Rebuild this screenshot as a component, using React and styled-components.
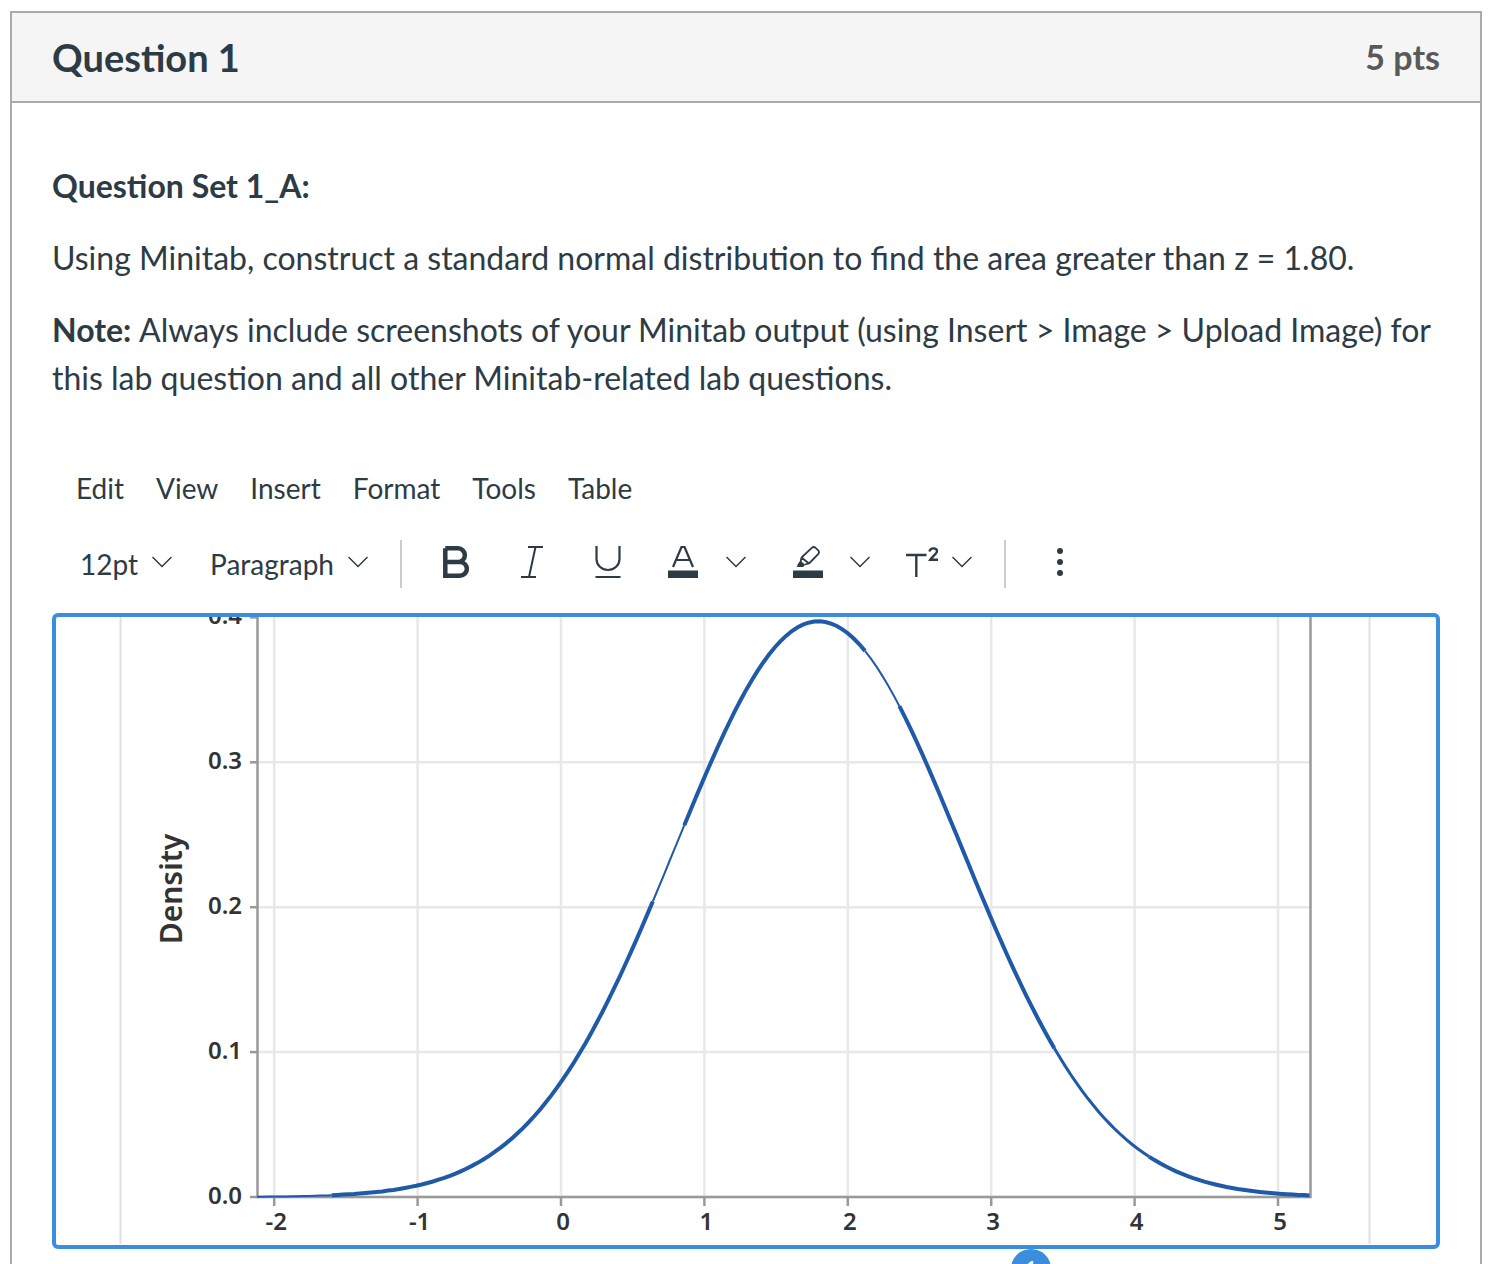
import React from 'react';
import styled, { createGlobalStyle } from 'styled-components';

const GlobalStyle = createGlobalStyle`
* {
  box-sizing: border-box;
}
body {
  margin: 0;
  background: #ffffff;
  color: #2d3b45;
  font-family: Lato, "Open Sans", sans-serif;
}
`;

const Page = styled.main`
height: 100vh;
overflow: hidden;
padding: 11px 14px 0 10px;
`;

const QuestionCard = styled.section`
border: 2px solid #aaaaaa;
min-height: 1400px;
`;

const QuestionHeader = styled.header`
display: flex;
align-items: center;
justify-content: space-between;
min-height: 90px;
padding: 0 40px;
background: #f5f5f5;
border-bottom: 2px solid #aaaaaa;
`;

const QuestionTitle = styled.h2`
margin: 0;
font-size: 38px;
line-height: 48px;
font-weight: 700;
`;

const Points = styled.span`
color: #595959;
font-size: 34px;
line-height: 48px;
font-weight: 700;
`;

const QuestionBody = styled.div`
padding: 59px 40px 0;
`;

const QuestionText = styled.div`
display: flex;
flex-direction: column;
gap: 24px;
padding-bottom: 62px;
`;

const Paragraph = styled.p`
margin: 0;
font-size: 32px;
line-height: 48px;
`;

const MenuBar = styled.nav`
display: flex;
gap: 32px;
padding: 0 24px;
`;

const MenuButton = styled.button`
border: 0;
padding: 0;
background: none;
color: inherit;
font-family: inherit;
font-size: 28px;
line-height: 48px;
cursor: pointer;
`;

const Toolbar = styled.div`
display: flex;
align-items: center;
height: 48px;
margin: 28px 0 25px;
padding-left: 28px;
`;

const ToolButton = styled.button`
display: flex;
align-items: center;
gap: 14px;
border: 0;
padding: 0;
margin-right: ${({ $after }) => $after || 0}px;
background: none;
color: inherit;
font-family: inherit;
font-size: 28px;
line-height: 48px;
cursor: pointer;
`;

const Separator = styled.span`
width: 2px;
height: 48px;
margin-right: ${({ $after }) => $after}px;
background: #c7cdd1;
`;

const Icon = styled.svg`
display: block;
flex: none;
margin-bottom: 4px;
fill: none;
stroke: currentColor;
`;

const Editor = styled.div`
position: relative;
height: 636px;
border: 4px solid #3b8ede;
border-radius: 6px;
`;

const Plot = styled.svg`
display: block;
margin: 0 auto;
max-width: 100%;
`;

const AxisText = styled.text`
fill: #333333;
font-family: "Noto Sans", "Open Sans", sans-serif;
font-size: ${({ $size }) => $size || 24}px;
font-weight: 600;
`;

const Badge = styled.span`
position: absolute;
top: 632px;
left: 955px;
width: 40px;
height: 40px;
border-radius: 50%;
background: #3b8ede;
color: #ffffff;
font-size: 24px;
line-height: 40px;
text-align: center;
`;

const menus = ['Edit', 'View', 'Insert', 'Format', 'Tools', 'Table'];
const xTicks = [-2, -1, 0, 1, 2, 3, 4, 5];
const yTicks = [0, 0.1, 0.2, 0.3, 0.4];

// the stroke gets lighter and heavier along the curve
const curveParts = [
  { from: -2.12, to: -1.6, width: 2 },
  { from: -1.6, to: 0.64, width: 4 },
  { from: 0.64, to: 0.86, width: 2 },
  { from: 0.86, to: 2.12, width: 4 },
  { from: 2.12, to: 2.36, width: 2 },
  { from: 2.36, to: 3.44, width: 4 },
  { from: 3.44, to: 4.1, width: 3 },
  { from: 4.1, to: 5.22, width: 4 },
];

const toX = (value) => 443 + value * 143.4;
const toY = (value) => 580 - value * 1449;
const density = (value) => 0.3973 * Math.exp(-((value - 1.795) ** 2) / 2);

const curvePoints = (from, to) => {
  const steps = Math.ceil((to - from) / 0.04);
  return Array.from({ length: steps + 1 }, (_, index) => {
    const value = from + ((to - from) * index) / steps;
    return `${toX(value).toFixed(1)},${toY(density(value)).toFixed(1)}`;
  }).join(' ');
};

function Chevron() {
  return (
    <Icon width="20" height="12" viewBox="0 0 20 12" strokeWidth="1.5">
      <path d="M.5 1 10 10.5 19.5 1" />
    </Icon>
  );
}

function DensityPlot() {
  return (
    <Plot width="1256" height="628" viewBox="0 0 1256 628" role="img" aria-label="Density">
      <g stroke="#e0e0e0" strokeWidth="2">
        <path d="M2.5 0V627M1251.5 0V627" />
      </g>
      <g stroke="#e8e8e8" strokeWidth="2.5">
        {xTicks.map((tick) => (
          <line key={ tick } x1={ toX(tick) } x2={ toX(tick) } y1="0" y2="580" />
        ))}
        {yTicks.slice(0, 4).map((tick) => (
          <line key={ tick } x1="139" x2="1193" y1={ toY(tick) } y2={ toY(tick) } />
        ))}
      </g>
      <g stroke="#999999" strokeWidth="2.5">
        <path d="M139.5 0V580H1192.5V0" fill="none" />
        {xTicks.map((tick) => (
          <line key={ tick } x1={ toX(tick) } x2={ toX(tick) } y1="580" y2="589" />
        ))}
        {yTicks.map((tick) => (
          <line key={ tick } x1="132" x2="139" y1={ toY(tick) } y2={ toY(tick) } />
        ))}
      </g>
      <g fill="none" stroke="#1f5aa8">
        {curveParts.map(({ from, to, width }) => (
          <polyline key={ from } points={ curvePoints(from, to) } strokeWidth={ width } />
        ))}
      </g>
      {yTicks.map((tick) => (
        <AxisText key={ tick } x="124" y={ toY(tick) + 7 } textAnchor="end">
          {tick.toFixed(1)}
        </AxisText>
      ))}
      {xTicks.map((tick) => (
        <AxisText key={ tick } x={ toX(tick) + 2 } y="613" textAnchor="middle">
          {tick}
        </AxisText>
      ))}
      <AxisText $size={ 30 } transform="translate(64 272) rotate(-90)" textAnchor="middle">
        Density
      </AxisText>
    </Plot>
  );
}

export default function App() {
  return (
    <Page>
      <GlobalStyle />
      <QuestionCard>
        <QuestionHeader>
          <QuestionTitle>Question 1</QuestionTitle>
          <Points>5 pts</Points>
        </QuestionHeader>
        <QuestionBody>
          <QuestionText>
            <Paragraph><strong>Question Set 1_A:</strong></Paragraph>
            <Paragraph>
              Using Minitab, construct a standard normal distribution to find the area
              greater than z = 1.80.
            </Paragraph>
            <Paragraph>
              <strong>{'Note: '}</strong>
              {'Always include screenshots of your Minitab output (using Insert > Image > Upload Image) for this lab question and all other Minitab-related lab questions.'}
            </Paragraph>
          </QuestionText>
          <MenuBar>
            {menus.map((menu) => (
              <MenuButton key={ menu } type="button">{menu}</MenuButton>
            ))}
          </MenuBar>
          <Toolbar>
            <ToolButton type="button" $after={ 38 }>
              12pt
              <Chevron />
            </ToolButton>
            <ToolButton type="button" $after={ 32 }>
              Paragraph
              <Chevron />
            </ToolButton>
            <Separator $after={ 41 } />
            <ToolButton type="button" aria-label="Bold" $after={ 51 }>
              <Icon width="26" height="32" viewBox="0 0 26 32" strokeWidth="4.5">
                <path d="M2.3 2.3H15a6.7 6.7 0 0 1 0 13.7H2.3M15 16h2a6.8 6.8 0 0 1 0 13.7H2.3V2.3" />
              </Icon>
            </ToolButton>
            <ToolButton type="button" aria-label="Italic" $after={ 52 }>
              <Icon width="23" height="32" viewBox="0 0 23 32" strokeWidth="2">
                <path d="M8 1h15M1 31h15M15.5 1 9 31" />
              </Icon>
            </ToolButton>
            <ToolButton type="button" aria-label="Underline" $after={ 47 }>
              <Icon width="26" height="32" viewBox="0 0 26 32" strokeWidth="2.2">
                <path d="M1.5 0v13a11.5 11 0 0 0 23 0V0M.5 31h25" />
              </Icon>
            </ToolButton>
            <ToolButton type="button" aria-label="Text color" $after={ 28 }>
              <Icon width="30" height="32" viewBox="0 0 30 32" strokeWidth="2.2">
                <path d="M5 21 13.5 1h3L25 21M8 14h14" />
                <path d="M0 24.5h30V32H0z" fill="currentColor" stroke="none" />
              </Icon>
            </ToolButton>
            <ToolButton type="button" aria-label="Text color options" $after={ 47 }>
              <Chevron />
            </ToolButton>
            <ToolButton type="button" aria-label="Highlight" $after={ 27 }>
              <Icon width="30" height="32" viewBox="0 0 30 32" strokeWidth="1.8">
                <path d="M8.5 11.5 18.8 1.8Q20.5.3 22.3 1.6L25 4.2Q26.8 6 25.4 7.8L16 17.5M8.5 11.5 16 17.5M8.5 11.5 7.7 15.5 5 19.5M16 17.5 12 18.5" />
                <path d="M7.7 15 12.3 18.8 10 21H3.5z" fill="currentColor" stroke="none" />
                <path d="M0 24.5h30V32H0z" fill="currentColor" stroke="none" />
              </Icon>
            </ToolButton>
            <ToolButton type="button" aria-label="Highlight options" $after={ 36 }>
              <Chevron />
            </ToolButton>
            <ToolButton type="button" aria-label="Superscript" $after={ 14 }>
              <Icon width="32" height="32" viewBox="0 0 32 32" strokeWidth="2.4">
                <path d="M0 9h20.5M10.3 9v22" />
                <path d="M23.5 5.5C24 1.5 31 1.2 31 5.2 31 8 27 9.5 24.3 13.7H32" />
              </Icon>
            </ToolButton>
            <ToolButton type="button" aria-label="Superscript options" $after={ 32 }>
              <Chevron />
            </ToolButton>
            <Separator $after={ 51 } />
            <ToolButton type="button" aria-label="More">
              <Icon width="6" height="32" viewBox="0 0 6 32">
                <g fill="currentColor" stroke="none">
                  <circle cx="3" cy="5" r="3" />
                  <circle cx="3" cy="16" r="3" />
                  <circle cx="3" cy="27" r="3" />
                </g>
              </Icon>
            </ToolButton>
          </Toolbar>
          <Editor>
            <DensityPlot />
            <Badge>1</Badge>
          </Editor>
        </QuestionBody>
      </QuestionCard>
    </Page>
  );
}
